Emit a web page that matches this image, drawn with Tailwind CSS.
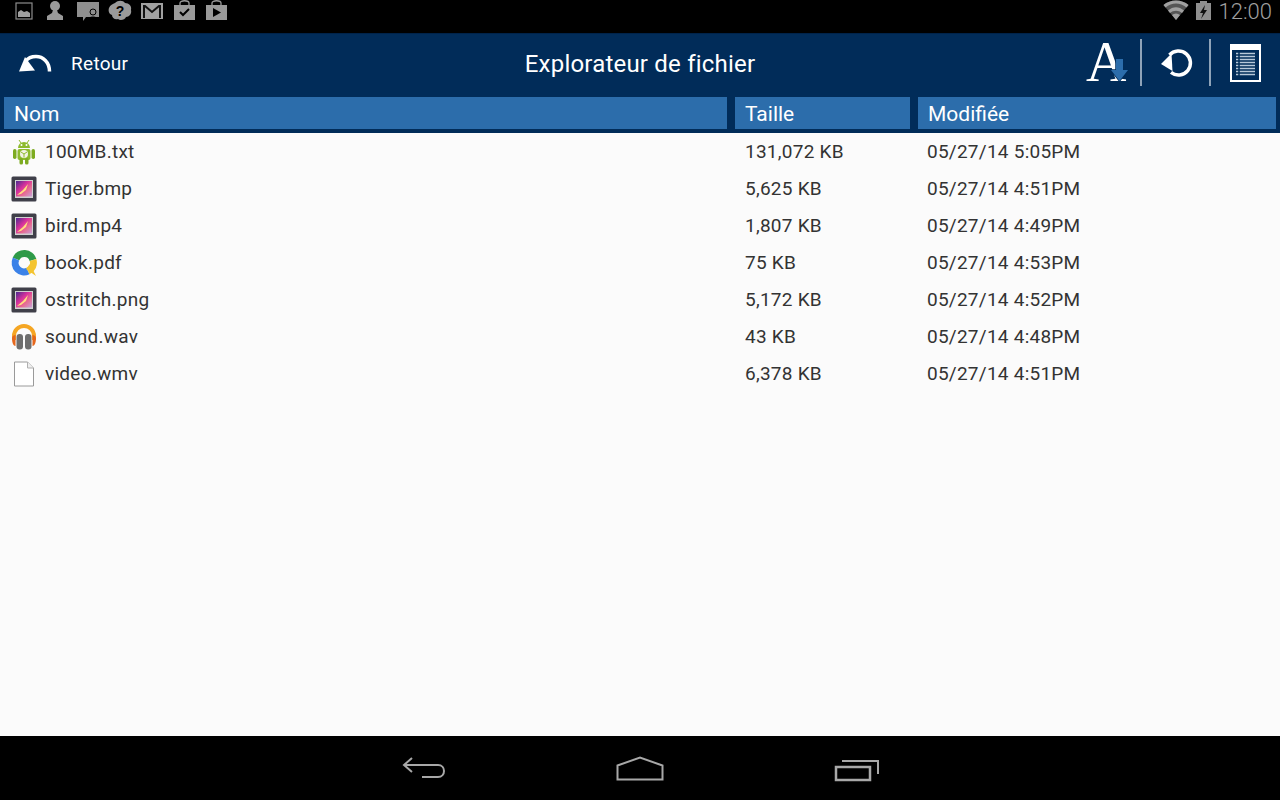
<!DOCTYPE html>
<html lang="fr">
<head>
    <meta charset="UTF-8">
    <meta name="viewport" content="width=device-width, initial-scale=1.0">
    <title>Explorateur de fichier</title>
    <script src="https://cdn.jsdelivr.net/npm/@tailwindcss/browser@4"></script>
</head>
<body class="bg-black overflow-hidden font-['Roboto',sans-serif]">
<svg class="absolute w-0 h-0" width="0" height="0">
    <defs>
        <linearGradient id="pic" x1="0" y1="0" x2="1" y2="1">
            <stop offset="0" stop-color="#4a2a90"/>
            <stop offset="0.4" stop-color="#d8309c"/>
            <stop offset="0.65" stop-color="#e86a90"/>
            <stop offset="1" stop-color="#c8a0d8"/>
        </linearGradient>
        <symbol id="picture" viewBox="0 0 26 26">
            <rect x="0.5" y="0.5" width="25" height="25" rx="1.5" fill="#3f3f49"/>
            <rect x="4" y="4" width="18" height="18" fill="#d0d0d0"/>
            <rect x="5" y="5" width="16" height="15.500" fill="url(#pic)"/>
            <path d="M6 19 L12 14 L17 8 L15 14 L10 18Z" fill="#ffdf80"/>
        </symbol>
    </defs>
</svg>

<div class="w-[1280px] h-[800px] flex flex-col">
    <!-- barre d'etat -->
    <div class="h-[33px] bg-black flex items-start justify-between pl-[15px] pr-[8px] text-[#9a9a9a]">
        <div class="flex items-start">
            <svg width="18" height="18" viewBox="0 0 18 18" class="mt-[2px]"><rect x="1" y="1" width="16" height="16" fill="none" stroke="#8c8c8c" stroke-width="1.2"/><path d="M3 15V10l3-2 3 2 3-1 3 2v4z" fill="#a0a0a0"/></svg>
            <svg width="20" height="21" viewBox="0 0 20 21" class="ml-[12px]"><circle cx="10" cy="6" r="5" fill="#9a9a9a"/><path d="M8 10h4l1 3 5 3v4H2v-4l5-3z" fill="#9a9a9a"/></svg>
            <svg width="24" height="22" viewBox="0 0 24 22" class="ml-[11px]"><path d="M1 2h22v15H10l-3 4v-4H1z" fill="#8f8f8f"/><circle cx="17" cy="12" r="3" fill="none" stroke="#000" stroke-width="1"/><path d="M12 20c0-4 10-4 10 0" fill="none" stroke="#000"/></svg>
            <svg width="24" height="22" viewBox="0 0 24 22" class="ml-[8px]"><path d="M7 3c3-3 8-3 10 0 4 0 7 3 6 7 1 4-2 7-5 7-1 3-6 4-8 2-3 1-6-1-6-4-3-1-4-4-3-7 1-3 4-4 6-5z" fill="#9a9a9a"/><text x="12" y="16" text-anchor="middle" font-size="14" font-weight="700" font-family="Liberation Sans" fill="#000">?</text></svg>
            <svg width="22" height="18" viewBox="0 0 22 18" class="ml-[9px] mt-[3px]"><rect width="22" height="16" y="0" fill="#a0a0a0"/><path d="M3 15V3h1l7 6 7-6h1v12" fill="none" stroke="#111" stroke-width="2"/></svg>
            <svg width="21" height="20" viewBox="0 0 21 20" class="ml-[11px]"><path d="M6 5V3c0-3 9-3 9 0v2" fill="none" stroke="#9a9a9a" stroke-width="1.3"/><rect y="5" width="21" height="15" fill="#9a9a9a"/><path d="M6 12l3 3 6-6" fill="none" stroke="#000" stroke-width="2"/></svg>
            <svg width="21" height="20" viewBox="0 0 21 20" class="ml-[11px]"><path d="M6 5V3c0-3 9-3 9 0v2" fill="none" stroke="#9a9a9a" stroke-width="1.3"/><rect y="5" width="21" height="15" fill="#9a9a9a"/><path d="M7 8v9l8-4.500z" fill="#000"/></svg>
        </div>
        <div class="flex items-start">
            <svg width="26" height="20" viewBox="0 0 26 20" class="ml-[2px]"><path d="M0.500 5C7-1 19-1 25.500 5L13 20z" fill="#555"/><path d="M0.500 5C7-1 19-1 25.500 5l-2 2.500C17 2 9 2 2.500 7.500zM5 10.500c5-4.500 11-4.500 16 0l-2 2.500c-3.500-3-8.500-3-12 0zM9 15c2.500-2 5.500-2 8 0l-4 5z" fill="#a0a0a0"/></svg>
            <svg width="15" height="20" viewBox="0 0 15 20" class="ml-[7px]"><path d="M4 3V1h7v2h4v17H0V3z" fill="#8f8f8f"/><path d="M9 5l-5 8h3l-2 6 6-9H8z" fill="#111"/></svg>
            <span class="ml-[8px] text-[22px] leading-[24px] font-light text-[#a0a0a0]">12:00</span>
        </div>
    </div>

    <!-- barre de titre -->
    <div class="h-[64px] bg-[#012c59] border-t border-[#00234a] pb-[6px] relative flex items-center text-white">
        <svg width="34" height="22" viewBox="0 0 34 22" class="ml-[18px]"><path d="M31.500 19.500C31.500 10 25 4.500 18 4.500C13 4.500 10 6 8 9" fill="none" stroke="#fff" stroke-width="3.500"/><path d="M1 19.500L7 5L17 18.500z" fill="#fff"/></svg>
        <span class="ml-[19px] pt-[3px] text-[19px] tracking-[0.3px]">Retour</span>
        <span class="absolute left-0 right-0 pt-[3px] text-center text-[24px] tracking-[0.2px]">Explorateur de fichier</span>
        <div class="ml-auto flex items-center h-full">
            <div class="relative w-[52px] h-[46px] mr-[1px]">
                <span class="absolute left-[-1px] top-[-6px] font-['Liberation_Serif',serif] text-[56px] leading-[56px]">A</span>
                <svg width="19" height="25" viewBox="-1 -1 19 25" class="absolute left-[23px] top-[18px]"><path d="M5 0h7v11h5l-8.500 11L0 11h5z" fill="#2c6dab" stroke="#012c59" stroke-width="1.500" paint-order="stroke"/></svg>
            </div>
            <div class="w-[2px] h-[47px] bg-[#8fa3b8]"></div>
            <div class="w-[67px] flex justify-center pl-[2px]">
                <svg width="33" height="30" viewBox="0 0 33 30"><path d="M9.500 7A12 12 0 1 1 11 24.400" fill="none" stroke="#fff" stroke-width="3.500"/><path d="M1 16L11.500 5.500L12.500 23z" fill="#fff"/></svg>
            </div>
            <div class="w-[2px] h-[47px] bg-[#8fa3b8]"></div>
            <div class="w-[69px] pl-[19px]">
                <svg width="31" height="38" viewBox="0 0 31 38"><rect x="1" y="1" width="29" height="36" fill="none" stroke="#fff" stroke-width="2"/><rect x="2" y="2" width="27" height="4" fill="#fff"/><path d="M6 9.500h19M6 12.500h19M6 15.500h19M6 18.500h19M6 21.500h19M6 24.500h19M6 27.500h19M6 30.500h19" stroke="#b8c8d8" stroke-width="1.500"/><path d="M9 6v27" stroke="#012c59" stroke-width="1.500"/></svg>
            </div>
        </div>
    </div>

    <!-- entetes -->
    <div class="h-[36px] bg-[#012c59] pb-[4px] px-[4px] grid grid-cols-[723px_175px_358px] gap-x-[8px] text-white text-[21px] leading-[26px]">
        <div class="bg-[#2c6dab] pl-[10px] pt-[2px] flex items-center">Nom</div>
        <div class="bg-[#2c6dab] pl-[10px] pt-[2px] flex items-center">Taille</div>
        <div class="bg-[#2c6dab] pl-[10px] pt-[2px] flex items-center">Modifiée</div>
    </div>

    <!-- liste des fichiers -->
    <div class="flex-1 bg-[#fbfbfb] text-[19px] tracking-[0.25px] text-[#333333]">
        <div class="h-[37px] px-[4px] grid grid-cols-[723px_175px_358px] gap-x-[8px] items-center">
            <div class="flex items-center pl-[7px]">
                <svg width="26" height="26" viewBox="0 0 26 26"><path d="M7 9a6 6 0 0 1 12 0z" fill="#8dbb2c"/><path d="M8 1l2 3M18 1l-2 3" stroke="#8dbb2c" stroke-width="1"/><circle cx="10.500" cy="6" r="1" fill="#fff"/><circle cx="15.500" cy="6" r="1" fill="#fff"/><rect x="6.500" y="10" width="13" height="11" rx="2" fill="#8dbb2c"/><rect x="2" y="10" width="3.500" height="10" rx="1.700" fill="#7dab20"/><rect x="20.500" y="10" width="3.500" height="10" rx="1.700" fill="#7dab20"/><rect x="8.500" y="19" width="3.500" height="6.500" rx="1.500" fill="#7dab20"/><rect x="14" y="19" width="3.500" height="6.500" rx="1.500" fill="#7dab20"/><circle cx="13" cy="15" r="4" fill="#f2f2e4"/><path d="M13 15v3.500M13 15l-3-2M13 15l3-2" stroke="#8dbb2c" stroke-width="1"/></svg>
                <span class="ml-[8px] pt-[2px]">100MB.txt</span>
            </div>
            <div class="pl-[10px] pt-[2px]">131,072 KB</div>
            <div class="pl-[9px] pt-[2px]">05/27/14 5:05PM</div>
        </div>
        <div class="h-[37px] px-[4px] grid grid-cols-[723px_175px_358px] gap-x-[8px] items-center">
            <div class="flex items-center pl-[7px]">
                <svg width="26" height="26"><use href="#picture"/></svg>
                <span class="ml-[8px] pt-[2px]">Tiger.bmp</span>
            </div>
            <div class="pl-[10px] pt-[2px]">5,625 KB</div>
            <div class="pl-[9px] pt-[2px]">05/27/14 4:51PM</div>
        </div>
        <div class="h-[37px] px-[4px] grid grid-cols-[723px_175px_358px] gap-x-[8px] items-center">
            <div class="flex items-center pl-[7px]">
                <svg width="26" height="26"><use href="#picture"/></svg>
                <span class="ml-[8px] pt-[2px]">bird.mp4</span>
            </div>
            <div class="pl-[10px] pt-[2px]">1,807 KB</div>
            <div class="pl-[9px] pt-[2px]">05/27/14 4:49PM</div>
        </div>
        <div class="h-[37px] px-[4px] grid grid-cols-[723px_175px_358px] gap-x-[8px] items-center">
            <div class="flex items-center pl-[7px]">
                <svg width="26" height="28" viewBox="0 0 26 28"><g fill="none" stroke-width="7"><path d="M5 10A9 9 0 0 1 22 11" stroke="#2e9a48"/><path d="M5 10A9 9 0 0 0 17 22" stroke="#3b82e8"/><path d="M22 11A9 9 0 0 1 17 22" stroke="#f4c430"/></g><path d="M15 20l4-5 6 12z" fill="#f4c430"/></svg>
                <span class="ml-[8px] pt-[2px]">book.pdf</span>
            </div>
            <div class="pl-[10px] pt-[2px]">75 KB</div>
            <div class="pl-[9px] pt-[2px]">05/27/14 4:53PM</div>
        </div>
        <div class="h-[37px] px-[4px] grid grid-cols-[723px_175px_358px] gap-x-[8px] items-center">
            <div class="flex items-center pl-[7px]">
                <svg width="26" height="26"><use href="#picture"/></svg>
                <span class="ml-[8px] pt-[2px]">ostritch.png</span>
            </div>
            <div class="pl-[10px] pt-[2px]">5,172 KB</div>
            <div class="pl-[9px] pt-[2px]">05/27/14 4:52PM</div>
        </div>
        <div class="h-[37px] px-[4px] grid grid-cols-[723px_175px_358px] gap-x-[8px] items-center">
            <div class="flex items-center pl-[7px]">
                <svg width="26" height="26" viewBox="0 0 26 26"><path d="M3 16V12a10 10 0 0 1 20 0v4" fill="none" stroke="#f5a623" stroke-width="4"/><path d="M1 14c0-2 2-3 3.500-3v11C2 22 1 18 1 14zM25 14c0-2-2-3-3.500-3v11C24 22 25 18 25 14z" fill="#e5671c"/><rect x="5.500" y="10" width="6.500" height="15.500" rx="3" fill="#6e6e6e"/><rect x="14" y="10" width="6.500" height="15.500" rx="3" fill="#6e6e6e"/></svg>
                <span class="ml-[8px] pt-[2px]">sound.wav</span>
            </div>
            <div class="pl-[10px] pt-[2px]">43 KB</div>
            <div class="pl-[9px] pt-[2px]">05/27/14 4:48PM</div>
        </div>
        <div class="h-[37px] px-[4px] grid grid-cols-[723px_175px_358px] gap-x-[8px] items-center">
            <div class="flex items-center pl-[7px]">
                <svg width="26" height="26" viewBox="0 0 26 26"><path d="M3.500 1h13l6 6v18h-19z" fill="#fff" stroke="#9a9a9a"/><path d="M16.500 1v6h6" fill="#eee" stroke="#b0b0b0"/></svg>
                <span class="ml-[8px] pt-[2px]">video.wmv</span>
            </div>
            <div class="pl-[10px] pt-[2px]">6,378 KB</div>
            <div class="pl-[9px] pt-[2px]">05/27/14 4:51PM</div>
        </div>
    </div>

    <!-- barre de navigation -->
    <div class="h-[64px] bg-black relative flex items-center justify-center">
        <svg width="44" height="24" viewBox="0 0 44 24" class="absolute left-[402px] top-[21px]"><path d="M10 1L2 8l8 7M2 8h34c8 0 8 12 0 12H20" fill="none" stroke="#a8a8a8" stroke-width="2"/></svg>
        <svg width="48" height="26" viewBox="0 0 48 26" class="absolute left-[616px] top-[20px]"><path d="M1.500 9.500L24 1.500l22.500 8v14h-45z" fill="none" stroke="#a8a8a8" stroke-width="2"/></svg>
        <svg width="46" height="24" viewBox="0 0 46 24" class="absolute left-[834px] top-[22px]"><rect x="2" y="9" width="34" height="13" fill="none" stroke="#a8a8a8" stroke-width="2.500"/><path d="M8 3h36v13" fill="none" stroke="#a8a8a8" stroke-width="2"/></svg>
    </div>
</div>
</body>
</html>
